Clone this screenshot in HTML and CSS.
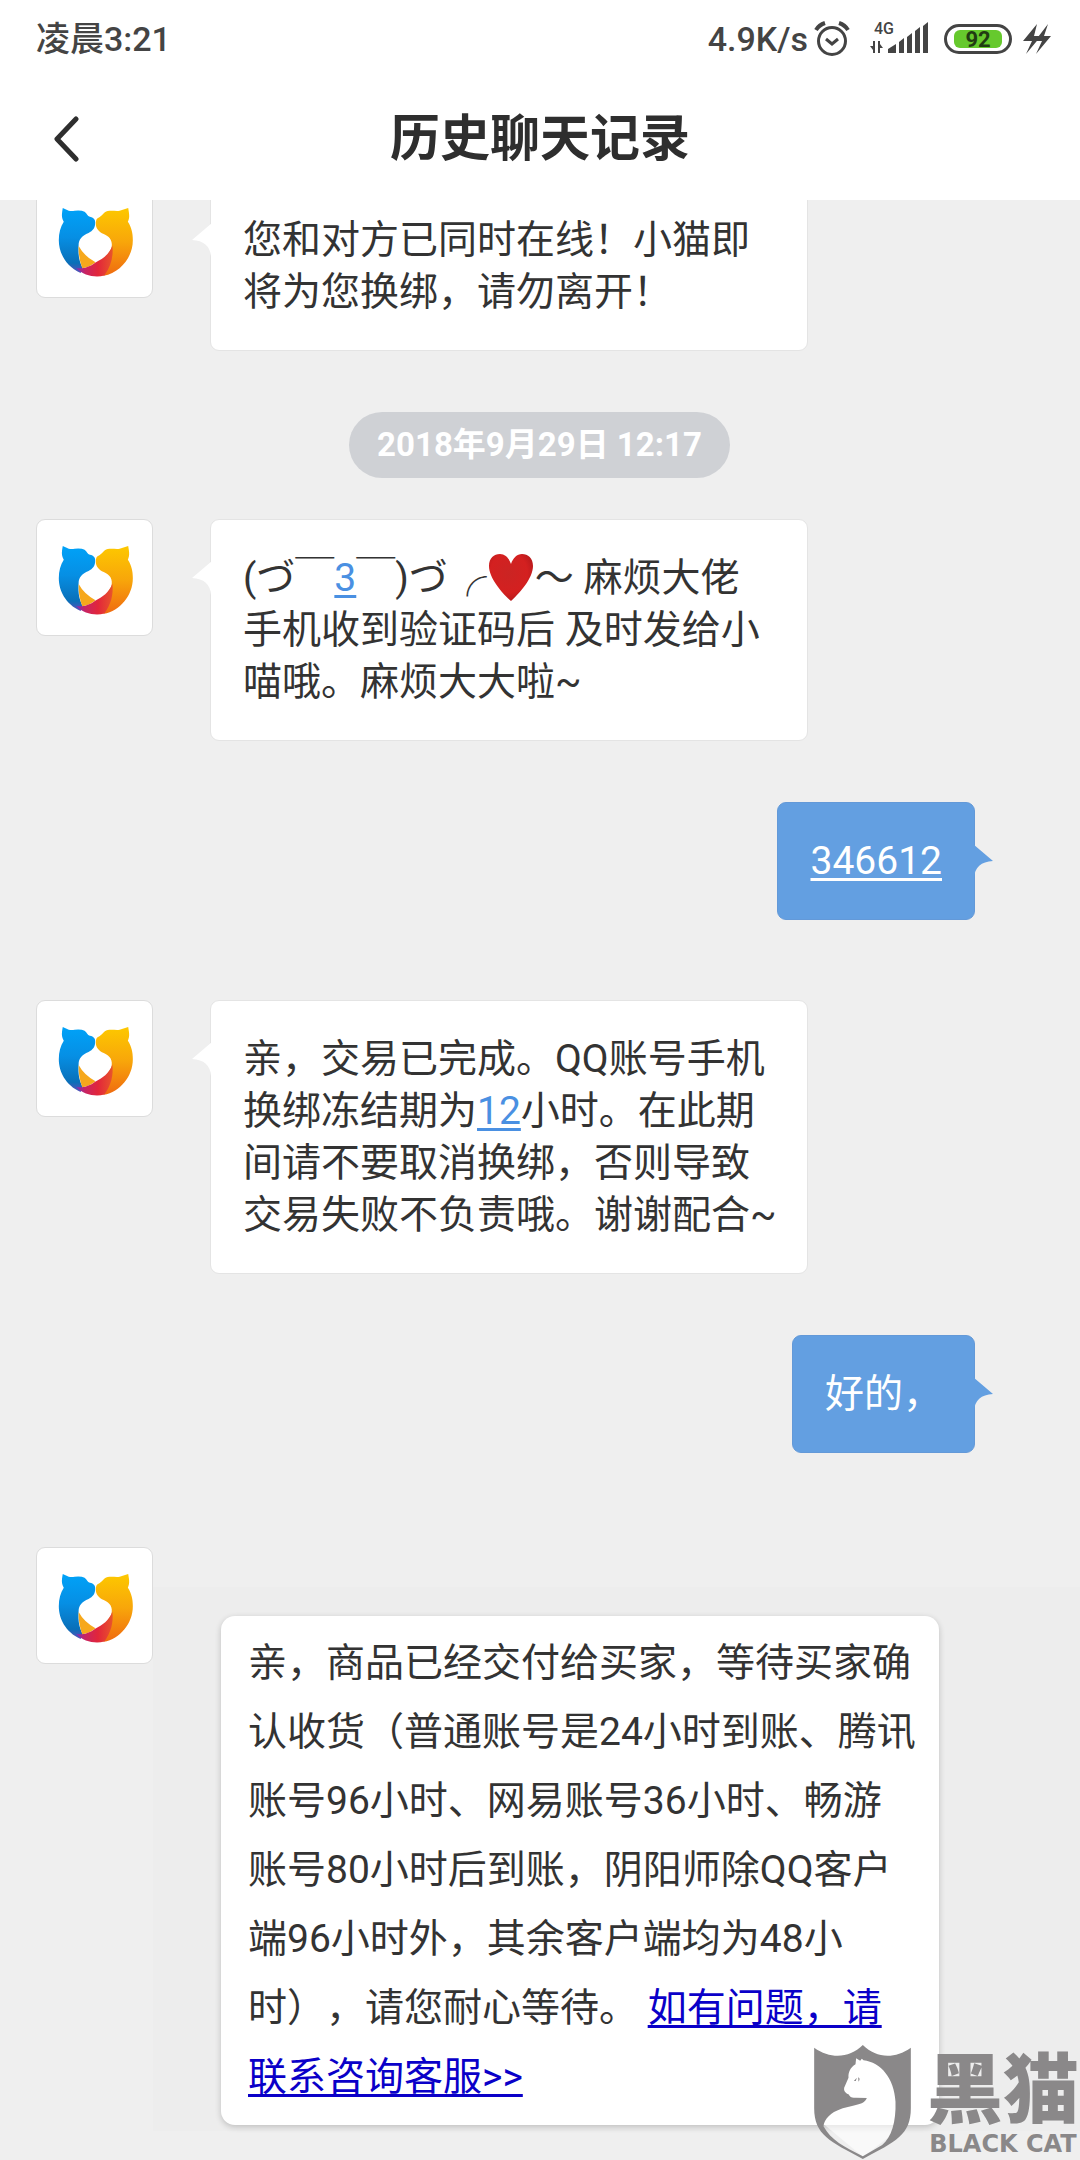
FILE: index.html
```
<!DOCTYPE html>
<html lang="zh-CN">
<head>
<meta charset="utf-8">
<meta name="viewport" content="width=device-width, initial-scale=1">
<title>历史聊天记录</title>
<link rel="stylesheet" href="styles.css">
</head>
<body>
<svg class="defs" aria-hidden="true">
  <defs>
    <linearGradient id="blue" x1="0" y1="0" x2="0" y2="1"><stop offset="0" stop-color="#00a2f8"/><stop offset=".45" stop-color="#068fe4"/><stop offset=".85" stop-color="#0a6fb8"/><stop offset="1" stop-color="#5a4fb8"/></linearGradient>
    <linearGradient id="gold" x1="0" y1="0" x2="0" y2="1"><stop offset="0" stop-color="#fdc800"/><stop offset=".5" stop-color="#f8a60a"/><stop offset="1" stop-color="#ef6a10"/></linearGradient>
    <linearGradient id="red" x1="0" y1="0" x2="1" y2="0"><stop offset="0" stop-color="#7a2cc0"/><stop offset=".25" stop-color="#c82463"/><stop offset=".6" stop-color="#e2263a"/><stop offset="1" stop-color="#e8542c"/></linearGradient>
    <radialGradient id="heart" cx=".45" cy=".4" r=".6"><stop offset="0" stop-color="#cb2423"/><stop offset=".7" stop-color="#d42020"/><stop offset="1" stop-color="#b81a1c"/></radialGradient>
    <symbol id="logo" viewBox="112 60 348 348">
      <path fill="url(#blue)" d="M190 139 208 147Q216 149 226 147 246 145 256 150C264 156 264 163 272 165 284 167 289 174 288 184 288 198 281 208 268 214 248 222 238 234 238 250 236 284 240 300 250 320L244 335C197 314 178 272 178 236 178 214 183 196 193 180 184 166 188 152 190 139Z"/>
      <path fill="url(#gold)" d="M388 139C390 153 394 166 387 180 398 197 402 214 402 236 402 288 364 334 314 344L300 320 337 262C342 238 334 226 314 217 299 211 290 200 290 186 290 177 292 170 298 168 310 163 312 152 326 148 338 145 350 149 362 147Z"/>
      <path fill="#f6a81c" d="M238 254Q254 284 289 303 272 318 249 321 237 290 238 254Z"/>
      <path fill="url(#red)" d="M340 252C330 280 310 293 288 304 266 320 250 322 230 320 254 343 286 350 316 343 336 315 344 285 340 252Z"/>
    </symbol>
  </defs>
</svg>

<header class="top">
  <div class="status">
    <span>凌晨3:21</span>
    <div class="status-right">
      <span>4.9K/s</span>
      <svg class="alarm" viewBox="0 0 36 36" fill="none" stroke="#444" stroke-width="3"><circle cx="18" cy="20" r="13.5"/><path d="M12 18l6 5 6-5"/><path d="M2 9q3-5 9-7M34 9q-3-5-9-7" stroke-width="4"/></svg>
      <svg class="signal" viewBox="0 0 58 34" fill="#444">
        <text x="4" y="12" font-size="16" font-weight="500">4G</text>
        <path d="M18 31v-4l8-5v9zM29 31V20l5-4v15zM37 31V15l5-4v20zM45 31v-22l5-4v26zM53 31V4l5-4v31zM3 19h2v12h-2v-3l-3-4h3zM8 31V19h2v3l3 4h-3v5z"/>
      </svg>
      <span class="battery"><span class="charge">92</span></span>
      <svg class="bolt" viewBox="0 0 28 30" fill="#444"><path d="M14 0 0 17h9L3 30 18 12H11zM25 0 12 17h7l-6 13L28 12h-7z"/></svg>
    </div>
  </div>
  <div class="bar">
    <button class="back" type="button" aria-label="返回"><svg viewBox="0 0 26 46" fill="none" stroke="#2e2e2e" stroke-width="5" stroke-linecap="round" stroke-linejoin="round"><path d="M23 3 4 23l19 20"/></svg></button>
    <h1>历史聊天记录</h1>
  </div>
</header>

<main class="chat">
  <article class="row first">
    <div class="avatar"><svg><use href="#logo"/></svg></div>
    <p class="bubble">您和对方已同时在线！小猫即将为您换绑，请勿离开！</p>
  </article>

  <time class="date">2018年9月29日 12:17</time>

  <article class="row">
    <div class="avatar"><svg><use href="#logo"/></svg></div>
    <p class="bubble">(づ￣<a href="#">3</a>￣)づ╭<svg class="heart" viewBox="0 0 46 48" role="img" aria-label="❤"><path fill="url(#heart)" d="M23 48C14 40 1 25 1 13 1 5 6 1 12 1c5 0 9 4 11 10C25 5 29 1 34 1c6 0 11 4 11 12 0 12-13 27-22 35z"/></svg>～ 麻烦大佬<br>手机收到验证码后 及时发给小<br>喵哦。麻烦大大啦~</p>
  </article>

  <article class="row sent">
    <p class="bubble"><a href="#">346612</a></p>
  </article>

  <article class="row">
    <div class="avatar"><svg><use href="#logo"/></svg></div>
    <p class="bubble">亲，交易已完成。QQ账号手机换绑冻结期为<a href="#">12</a>小时。在此期间请不要取消换绑，否则导致交易失败不负责哦。谢谢配合~</p>
  </article>

  <article class="row sent">
    <p class="bubble">好的，</p>
  </article>

  <article class="row notice">
    <div class="avatar"><svg><use href="#logo"/></svg></div>
    <div class="panel">
      <p class="card">亲，商品已经交付给买家，等待买家确<br>认收货（普通账号是24小时到账、腾讯<br>账号96小时、网易账号36小时、畅游<br>账号80小时后到账，阴阳师除QQ客户<br>端96小时外，其余客户端均为48小<br>时），请您耐心等待。 <a href="#">如有问题，请<br>联系咨询客服&gt;&gt;</a></p>
    </div>
  </article>
</main>

<div class="watermark">
  <svg viewBox="0 0 290 342">
    <path fill="#fff" fill-opacity=".6" d="M20 230 90 20 240 60 270 240 147 336Z"/>
    <path fill="#8a8889" fill-rule="evenodd" d="M0 8C50 43 105 40 146 0 187 40 240 43 290 8V190C290 270 245 290 146 342 48 290 0 270 0 190ZM126 40 124 58C108 68 102 82 103 98L90 128C88 140 96 144 103 148 108 157 114 160 125 158L158 159C150 182 112 180 80 192 50 202 30 222 28 244 50 285 90 306 146 334L204 300C232 276 246 230 244 170 240 100 200 52 148 46L143 41 138 47ZM119 108 128 98 125 108ZM132 97Q140 101 133 110Z"/>
  </svg>
  <div class="brand"><strong>黑猫</strong><span>BLACK CAT</span></div>
</div>
</body>
</html>
```
FILE: styles.css
```
* { box-sizing: border-box; }

body {
  margin: 0;
  min-height: 100vh;
  position: relative;
  background: #efefef;
  color: #333;
  font-family: Roboto, "Noto Sans CJK SC", sans-serif;
  font-size: 39px;
  line-height: 52px;
  text-spacing-trim: space-all;
  overflow-x: hidden;
}

p, h1 { margin: 0; }
a { color: #4a90e2; text-underline-offset: 4px; text-decoration-skip-ink: none; }
.defs { position: absolute; width: 0; height: 0; }

/* Status bar and title */
.top { position: relative; z-index: 1; height: 200px; background: #fff; }
.status {
  display: flex;
  justify-content: space-between;
  height: 78px;
  padding: 0 29px 0 36px;
  align-items: center;
  color: #444;
  font-size: 34px;
  font-weight: 500;
}
.status-right { display: flex; align-items: center; }
.alarm { width: 36px; height: 36px; margin: 0 20px 0 6px; }
.signal { width: 58px; height: 34px; margin-right: 16px; overflow: visible; }
.battery {
  width: 68px;
  height: 30px;
  padding: 4px 7px;
  border: 3px solid #444;
  border-radius: 15px;
}
.charge {
  display: block;
  height: 18px;
  margin-top: -1px;
  border-radius: 6px;
  background: #66c92d;
  color: #213c12;
  font-size: 22px;
  font-weight: 700;
  line-height: 19px;
  text-align: center;
}
.bolt { width: 28px; height: 30px; margin-left: 11px; }

.bar { display: grid; grid-template-columns: 110px 1fr 110px; align-items: center; height: 122px; }
.back { padding: 0; border: 0; background: none; height: 80px; text-align: left; padding-left: 53px; }
.back svg { display: block; width: 26px; height: 46px; }
.bar h1 { text-align: center; color: #2e2e2e; font-size: 50px; line-height: 72px; font-weight: 700; }

/* Messages */
.chat { display: flex; flex-direction: column; padding: 0 105px 24px 36px; }
.row { display: flex; align-items: flex-start; gap: 57px; }
.first { margin-top: -19px; }
.avatar {
  flex: none;
  width: 117px;
  height: 117px;
  border: 1px solid #dcdcdc;
  border-radius: 9px;
  background: #fff;
}
.avatar svg { display: block; width: 100%; height: 100%; }
.bubble {
  position: relative;
  flex: 0 1 598px;
  padding: 32px 24px 32px 32px;
  border: 1px solid #e4e4e4;
  border-radius: 9px;
  background: #fff;
}
.bubble::before {
  content: "";
  position: absolute;
  top: 41px;
  left: -19px;
  width: 20px;
  height: 34px;
  background: #fff;
  clip-path: path("M20 0 0 17Q18 18 19 34H20Z");
}
.heart { width: 46px; height: 48px; margin: 0 1px; vertical-align: -10px; }

.date {
  align-self: center;
  margin: 61px 0 41px 68px;
  padding: 0 28px;
  border-radius: 33px;
  background: #cfd1d5;
  color: #fff;
  font-size: 33px;
  font-weight: 700;
  line-height: 66px;
}

.sent { justify-content: flex-end; margin: 61px 0 80px; }
.sent .bubble { flex: none; padding-right: 32px; border-color: #6399d8; background: #639fe1; color: #fff; }
.sent .bubble::before { left: auto; right: -19px; background: #639fe1; clip-path: path("M0 0 20 17Q2 18 1 34H0Z"); }
.sent a { color: inherit; }

.notice { gap: 0; margin: 14px -105px 0 0; }
.panel { flex: 1; margin-top: 40px; padding: 29px 100px 6px 68px; background: #ededed; }
.card {
  max-width: 718px;
  padding: 13px 0 13px 27px;
  border-radius: 14px;
  background: #fff;
  box-shadow: 0 2px 6px rgba(0, 0, 0, .2);
  line-height: 69px;
  white-space: nowrap;
}
.card a { color: #0a00c8; }

/* Logo laid over the lower right corner */
.watermark { position: absolute; right: 1px; bottom: 1px; display: flex; align-items: flex-end; gap: 16px; color: #8a8889; }
.watermark svg { width: 97px; height: 114px; }
.brand { display: flex; flex-direction: column; align-items: center; }
.brand strong { font-size: 76px; font-weight: 900; line-height: 76px; }
.brand span { font: 700 24px/30px "DejaVu Sans", sans-serif; }
```
